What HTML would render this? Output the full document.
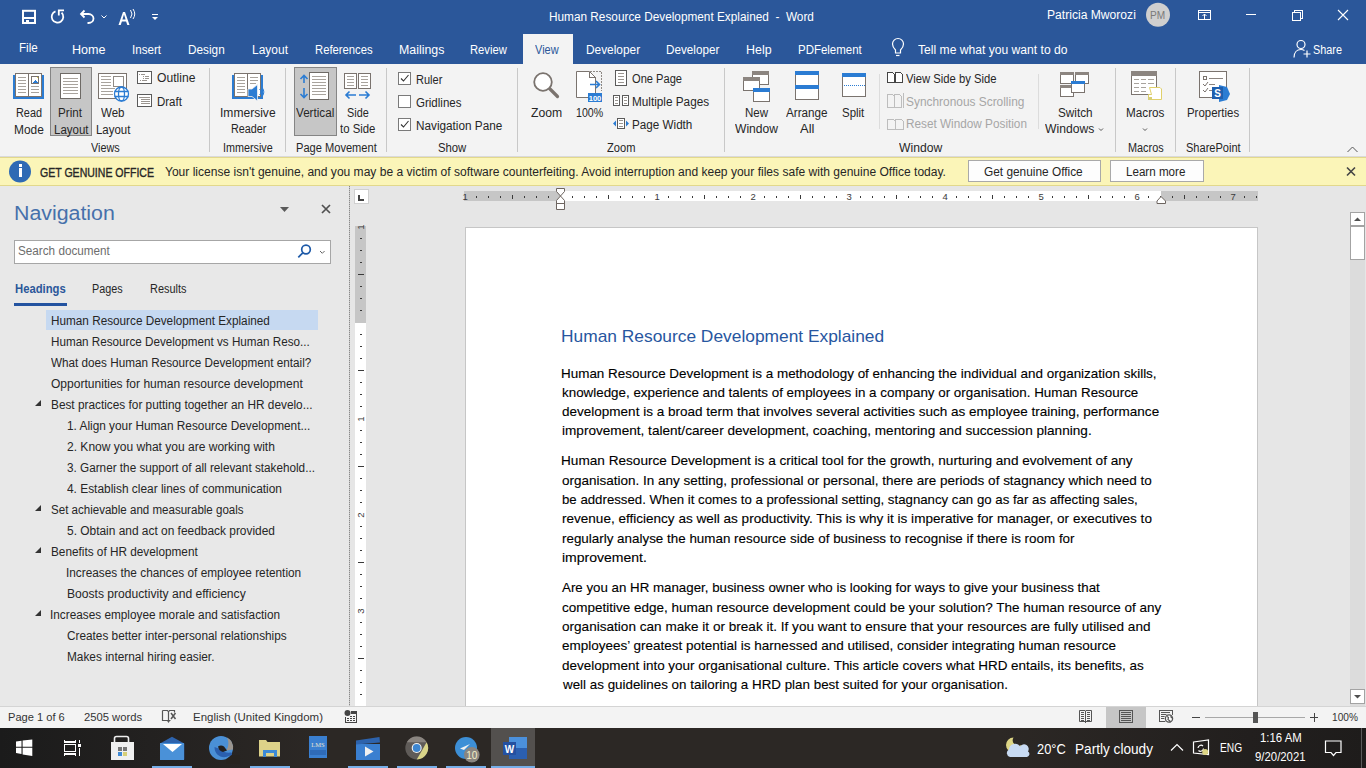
<!DOCTYPE html>
<html><head><meta charset="utf-8">
<style>
*{margin:0;padding:0;box-sizing:border-box}
html,body{width:1366px;height:768px;overflow:hidden;background:#e6e6e6;font-family:"Liberation Sans",sans-serif}
.a{position:absolute}
.t{position:absolute;white-space:pre;line-height:1;transform-origin:0 0}
svg{position:absolute;overflow:visible}
</style></head><body>
<div class="a" style="left:0;top:0;width:1366px;height:64px;background:#2b579a"></div>
<div class="a" style="left:523px;top:34px;width:50px;height:30px;background:#f3f3f3"></div>
<div class="a" style="left:0;top:64px;width:1366px;height:93px;background:#f3f3f3;border-bottom:1px solid #dadada"></div>
<div class="a" style="left:0;top:157px;width:1366px;height:29px;background:#fbf5b8;border-top:1px solid #e2d88c;border-bottom:1px solid #e2d88c"></div>
<div class="a" style="left:0;top:186px;width:349px;height:520px;background:#e8e8e8"></div>
<div class="a" style="left:349px;top:186px;width:1px;height:520px;background:#c6c6c6"></div>
<div class="a" style="left:350px;top:186px;width:1016px;height:520px;background:#e6e6e6"></div>
<div class="a" style="left:465px;top:227px;width:793px;height:479px;background:#fff;border:1px solid #c6c6c6;border-bottom:none"></div>
<div class="a" style="left:0;top:706px;width:1366px;height:22px;background:#f3f3f3;border-top:1px solid #d4d4d4"></div>
<div class="a" style="left:0;top:728px;width:1366px;height:40px;background:linear-gradient(90deg,#1b1b1b 0px,#232120 150px,#2c2825 320px,#2c2825 1000px,#221f1e 1250px,#1e1c1b 1366px)"></div>
<svg width="1366" height="768" style="left:0;top:0" shape-rendering="crispEdges">
<!-- ===== QAT ===== -->
<g fill="none" stroke="#fff" shape-rendering="geometricPrecision">
 <rect x="23" y="10.8" width="12" height="12.2" stroke-width="2"/>
 <path d="M55.5 11.35A5.8 5.8 0 1 0 61.6 12.7" stroke-width="1.8"/>
 <path d="M58.8 15.5V10.4H64" stroke-width="1.8"/>
 <path d="M81 14h7.5a5 4.5 0 0 1 0 9h-1" stroke-width="1.8"/>
 <path d="M84.5 10.5l-3.5 3.5 3.5 3.5" stroke-width="1.8"/>
 <path d="M101.5 15.5l2.5 2.5 2.5-2.5" stroke-width="1"/>
 <path d="M130.5 10a5 6 0 0 1 0 8M133 9a7 8 0 0 1 0 10" stroke-width="1"/>
</g>
<rect x="22" y="16.8" width="14" height="2.5" fill="#fff"/>
<rect x="26" y="20" width="3" height="3" fill="#fff"/>
<path d="M118.5 25l4.5-13h2l4.5 13h-2.2l-1.2-3.5h-4.2l-1.2 3.5zM122.4 19.5h3.2l-1.6-5z" fill="#fff" shape-rendering="geometricPrecision"/>
<rect x="152" y="14" width="6" height="1" fill="#fff"/>
<path d="M152 17h6l-3 3z" fill="#fff" shape-rendering="geometricPrecision"/>
<!-- window controls -->
<circle cx="1158" cy="14.8" r="12" fill="#cfcfcf" shape-rendering="geometricPrecision"/>
<rect x="1198.5" y="10.5" width="12" height="9" fill="none" stroke="#fff"/>
<rect x="1198" y="12" width="13" height="1" fill="#fff"/>
<path d="M1204.5 19v-5M1202.5 16l2-2 2 2" fill="none" stroke="#fff" shape-rendering="geometricPrecision"/>
<rect x="1246" y="14" width="10" height="1" fill="#fff"/>
<rect x="1292.5" y="12.5" width="8" height="8" fill="none" stroke="#fff"/>
<path d="M1294.5 12.5v-2h8v8h-2" fill="none" stroke="#fff"/>
<path d="M1338 10l10 10M1348 10l-10 10" stroke="#fff" stroke-width="1.1" shape-rendering="geometricPrecision"/>
<!-- lightbulb -->
<g fill="none" stroke="#fff" stroke-width="1.2" shape-rendering="geometricPrecision">
 <path d="M895.5 53v-3c-1.5-1.5-3-3.5-3-6a5.5 5.5 0 0 1 11 0c0 2.5-1.5 4.5-3 6v3z"/>
 <path d="M896 55.5h3.5"/>
</g>
<!-- share icon -->
<g fill="none" stroke="#fff" stroke-width="1.2" shape-rendering="geometricPrecision">
 <circle cx="1301" cy="44.5" r="4"/>
 <path d="M1294 57.5c0-5 3-8 7-8 1.5 0 2.5.4 3.5 1"/>
 <path d="M1307 50.5v7M1303.5 54h7"/>
</g>
<!-- ===== Ribbon selected buttons ===== -->
<rect x="50.5" y="67.5" width="41" height="68" fill="#c6c6c6" stroke="#858585"/>
<rect x="294.5" y="67.5" width="42" height="68" fill="#c6c6c6" stroke="#858585"/>
<!-- separators -->
<g fill="#c8c8c8">
 <rect x="209" y="68" width="1" height="84"/><rect x="285" y="68" width="1" height="84"/><rect x="386" y="68" width="1" height="84"/>
 <rect x="517" y="68" width="1" height="84"/><rect x="724" y="68" width="1" height="84"/> <rect x="1115" y="68" width="1" height="84"/><rect x="1175" y="68" width="1" height="84"/><rect x="1249" y="68" width="1" height="84"/>
</g>
<g fill="#dcdcdc"><rect x="879" y="74" width="1" height="55"/><rect x="1038" y="74" width="1" height="55"/></g>
<!-- Read Mode -->
<rect x="13" y="75" width="31" height="24" fill="#2b7cd3"/>
<rect x="15.5" y="73.5" width="13" height="23" fill="#fff" stroke="#7a736e"/>
<rect x="28.5" y="73.5" width="13" height="23" fill="#fff" stroke="#7a736e"/>
<g fill="#a8a39d"><rect x="18" y="77" width="8" height="1"/><rect x="18" y="80" width="8" height="1"/><rect x="18" y="83" width="8" height="1"/><rect x="18" y="86" width="8" height="1"/><rect x="18" y="89" width="8" height="1"/><rect x="18" y="92" width="8" height="1"/>
<rect x="31" y="86" width="8" height="1"/><rect x="31" y="89" width="8" height="1"/><rect x="31" y="92" width="8" height="1"/></g>
<rect x="31.5" y="76.5" width="7" height="7" fill="#fff" stroke="#7a736e"/>
<path d="M32 83l3-3 2 2 1-1v2z" fill="#2b7cd3"/><rect x="37" y="77" width="1" height="1" fill="#e8d44d"/>
<!-- Print Layout -->
<rect x="60.5" y="73.5" width="20" height="25" fill="#fff" stroke="#6e6a66"/>
<g fill="#a8a39d"><rect x="63" y="78" width="15" height="1"/><rect x="63" y="81" width="15" height="1"/><rect x="63" y="84" width="15" height="1"/><rect x="63" y="87" width="15" height="1"/><rect x="63" y="90" width="15" height="1"/><rect x="63" y="93" width="15" height="1"/></g>
<!-- Web Layout -->
<rect x="98.5" y="73.5" width="28" height="25" fill="#fff" stroke="#7a736e"/>
<g fill="#a8a39d"><rect x="101" y="76" width="10" height="1"/><rect x="101" y="79" width="10" height="1"/><rect x="101" y="82" width="10" height="1"/><rect x="101" y="85" width="10" height="1"/><rect x="101" y="88" width="14" height="1"/><rect x="101" y="91" width="12" height="1"/><rect x="101" y="94" width="12" height="1"/></g>
<rect x="113.5" y="76.5" width="10" height="10" fill="#fff" stroke="#8f8a85"/>
<g shape-rendering="geometricPrecision" fill="none" stroke="#2b7cd3" stroke-width="1.3">
 <circle cx="121.5" cy="94" r="7" fill="#fff"/>
 <ellipse cx="121.5" cy="94" rx="3" ry="7"/>
 <path d="M114.5 91.5h14M114.5 96.5h14"/>
</g>
<!-- Outline / Draft -->
<rect x="137.5" y="71.5" width="14" height="12" fill="#fff" stroke="#5a5a5a"/>
<g fill="#9a9590"><rect x="139" y="74" width="1" height="1"/><rect x="141" y="74" width="4" height="1"/><rect x="143" y="76" width="1" height="1"/><rect x="145" y="76" width="4" height="1"/><rect x="143" y="78" width="1" height="1"/><rect x="145" y="78" width="4" height="1"/><rect x="140" y="80" width="1" height="1"/><rect x="142" y="80" width="5" height="1"/></g>
<rect x="137.5" y="94.5" width="14" height="12" fill="#fff" stroke="#5a5a5a"/>
<g fill="#9a9590"><rect x="139" y="97" width="11" height="1"/><rect x="141" y="99" width="9" height="1"/><rect x="141" y="101" width="9" height="1"/><rect x="141" y="103" width="9" height="1"/></g>
<!-- Immersive Reader -->
<rect x="232" y="75" width="31" height="24" fill="#2b7cd3"/>
<rect x="234.5" y="73.5" width="13" height="23" fill="#fff" stroke="#7a736e"/>
<rect x="247.5" y="73.5" width="13" height="23" fill="#fff" stroke="#7a736e"/>
<g fill="#a8a39d"><rect x="237" y="77" width="8" height="1"/><rect x="237" y="80" width="8" height="1"/><rect x="237" y="83" width="8" height="1"/><rect x="237" y="86" width="8" height="1"/><rect x="237" y="89" width="8" height="1"/><rect x="237" y="92" width="8" height="1"/>
<rect x="250" y="77" width="8" height="1"/><rect x="250" y="80" width="8" height="1"/><rect x="250" y="83" width="6" height="1"/></g>
<path d="M248 89h4l5.5-4.5v16.5l-5.5-4.5h-4z" fill="#2b7cd3" stroke="#f3f3f3" stroke-width="0.8" shape-rendering="geometricPrecision"/>
<path d="M259.5 89a4 4 0 0 1 0 6M261.5 87a6.5 6.5 0 0 1 0 10" fill="none" stroke="#2b7cd3" stroke-width="1" shape-rendering="geometricPrecision"/>
<!-- Vertical -->
<g fill="none" stroke="#2b7cd3" stroke-width="1.6" shape-rendering="geometricPrecision">
 <path d="M304 76v7M304 88v9M300.5 79l3.5-3.5 3.5 3.5M300.5 94l3.5 3.5 3.5-3.5"/>
</g>
<rect x="309.5" y="72.5" width="19" height="27" fill="#fff" stroke="#6e6a66"/>
<g fill="#a8a39d"><rect x="312" y="76" width="14" height="1"/><rect x="312" y="79" width="14" height="1"/><rect x="312" y="82" width="14" height="1"/><rect x="312" y="85" width="14" height="1"/><rect x="312" y="88" width="14" height="1"/><rect x="312" y="91" width="14" height="1"/><rect x="312" y="94" width="14" height="1"/></g>
<!-- Side to Side -->
<rect x="344.5" y="73.5" width="12" height="15" fill="#fff" stroke="#7a736e"/>
<rect x="358.5" y="73.5" width="12" height="15" fill="#fff" stroke="#7a736e"/>
<g fill="#a8a39d"><rect x="347" y="76" width="7" height="1"/><rect x="347" y="79" width="7" height="1"/><rect x="347" y="82" width="7" height="1"/><rect x="347" y="85" width="7" height="1"/><rect x="361" y="76" width="7" height="1"/><rect x="361" y="79" width="7" height="1"/><rect x="361" y="82" width="7" height="1"/><rect x="361" y="85" width="7" height="1"/></g>
<g fill="none" stroke="#2b7cd3" stroke-width="1.6" shape-rendering="geometricPrecision">
 <path d="M346 95h10M349.5 91.5l-3.5 3.5 3.5 3.5M359 95h10M365.5 91.5l3.5 3.5-3.5 3.5"/>
</g>
<!-- checkboxes -->
<g fill="#fff" stroke="#7a7a7a"><rect x="398.5" y="72.5" width="12" height="12"/><rect x="398.5" y="95.5" width="12" height="12"/><rect x="398.5" y="118.5" width="12" height="12"/></g>
<g fill="none" stroke="#333" stroke-width="1.1" shape-rendering="geometricPrecision"><path d="M401 78.5l2.5 2.5 5-6"/><path d="M401 124.5l2.5 2.5 5-6"/></g>
<!-- Zoom -->
<g shape-rendering="geometricPrecision">
 <path d="M549.5 88.5l8 8" stroke="#7a736e" stroke-width="3.2" stroke-linecap="round"/>
 <circle cx="543" cy="82" r="8.8" fill="#fff" stroke="#7a736e" stroke-width="1.8"/>
</g>
<!-- 100% -->
<path d="M576.5 71.5h13l6 6v20h-19z" fill="#fff" stroke="#7a736e" shape-rendering="geometricPrecision"/>
<path d="M589.5 71.5v6h6" fill="none" stroke="#7a736e"/>
<path d="M590 71.5h11.5v19" fill="none" stroke="#8f8a85" stroke-dasharray="2 1"/>
<g fill="none" stroke="#2b7cd3" stroke-width="1.6" shape-rendering="geometricPrecision"><path d="M590 84.5h9.5M596 81l3.5 3.5-3.5 3.5"/></g>
<rect x="588" y="93" width="14" height="9" fill="#2b7cd3"/>
<text x="595" y="100.6" font-family="Liberation Sans" font-size="7.5" font-weight="700" fill="#fff" text-anchor="middle" shape-rendering="geometricPrecision">100</text>
<!-- One page / Multiple / Width -->
<rect x="615.5" y="70.5" width="11" height="15" fill="#fff" stroke="#5a5a5a"/>
<g fill="#9a9590"><rect x="618" y="73" width="6" height="1"/><rect x="618" y="76" width="6" height="1"/><rect x="618" y="79" width="6" height="1"/><rect x="618" y="82" width="6" height="1"/></g>
<rect x="613.5" y="95.5" width="6" height="10" fill="#fff" stroke="#5a5a5a"/><rect x="622.5" y="95.5" width="6" height="10" fill="#fff" stroke="#5a5a5a"/>
<g fill="#9a9590"><rect x="615" y="97" width="3" height="1"/><rect x="615" y="100" width="3" height="1"/><rect x="615" y="103" width="3" height="1"/><rect x="624" y="97" width="3" height="1"/><rect x="624" y="100" width="3" height="1"/><rect x="624" y="103" width="3" height="1"/></g>
<rect x="617.5" y="118.5" width="7" height="10" fill="#fff" stroke="#5a5a5a"/>
<g fill="#9a9590"><rect x="619" y="120" width="4" height="1"/><rect x="619" y="123" width="4" height="1"/><rect x="619" y="126" width="4" height="1"/></g>
<path d="M613 123.5l3-3v6zM629 123.5l-3-3v6z" fill="#2b7cd3" shape-rendering="geometricPrecision"/>
<!-- New Window -->
<rect x="752.5" y="71.5" width="16" height="13" fill="#fff" stroke="#7a736e"/><rect x="752" y="71" width="17" height="4" fill="#8c8580"/>
<rect x="743.5" y="77.5" width="16" height="13" fill="#fff" stroke="#7a736e"/><rect x="743" y="77" width="17" height="4" fill="#8c8580"/>
<rect x="753.5" y="88.5" width="16" height="13" fill="#fff" stroke="#7a736e"/><rect x="753" y="88" width="17" height="4" fill="#2b7cd3"/>
<!-- Arrange All -->
<rect x="795.5" y="71.5" width="23" height="28" fill="#fff" stroke="#7a736e"/>
<rect x="795" y="71" width="24" height="4" fill="#2b7cd3"/><rect x="795" y="85" width="24" height="4" fill="#2b7cd3"/>
<!-- Split -->
<rect x="842.5" y="73.5" width="23" height="23" fill="#fff" stroke="#7a736e"/>
<rect x="842" y="73" width="24" height="4" fill="#2b7cd3"/>
<path d="M844 85.5h21" stroke="#2b7cd3" stroke-dasharray="1 1"/>
<!-- View side by side etc -->
<g fill="#fff" stroke="#444"><path d="M887.5 72.5h5l2 2v8h-7z"/><path d="M895.5 72.5h5l2 2v8h-7z"/></g>
<g fill="none" stroke="#bdbdbd"><path d="M887.5 94.5h5l2 2v11h-7z"/><path d="M894.5 94.5h5l2 2v11h-7z"/><path d="M903.5 93v15"/></g>
<g fill="none" stroke="#bdbdbd"><path d="M887.5 119.5h6l2 2v8h-8z"/><path d="M895.5 119.5h6l2 2v8h-8z"/></g>
<!-- Switch Windows -->
<rect x="1060.5" y="72.5" width="13" height="11" fill="#fff" stroke="#7a736e"/><rect x="1060" y="72" width="14" height="3" fill="#8c8580"/>
<rect x="1075.5" y="72.5" width="13" height="11" fill="#fff" stroke="#7a736e"/><rect x="1075" y="72" width="14" height="3" fill="#8c8580"/>
<rect x="1060.5" y="85.5" width="13" height="11" fill="#fff" stroke="#7a736e"/><rect x="1060" y="85" width="14" height="3" fill="#8c8580"/>
<rect x="1071.5" y="81.5" width="13" height="11" fill="#fff" stroke="#7a736e"/><rect x="1071" y="81" width="14" height="3" fill="#2b7cd3"/>
<path d="M1099 128.5l2 2 2-2" fill="none" stroke="#555" shape-rendering="geometricPrecision"/>
<!-- Macros -->
<rect x="1131.5" y="71.5" width="25" height="23" fill="#fff" stroke="#7a736e"/><rect x="1131" y="71" width="26" height="5" fill="#8c8580"/>
<g fill="#a8a39d"><rect x="1134" y="79" width="5" height="1"/><rect x="1141" y="79" width="5" height="1"/><rect x="1148" y="79" width="6" height="1"/><rect x="1134" y="83" width="5" height="1"/><rect x="1141" y="83" width="5" height="1"/><rect x="1148" y="83" width="6" height="1"/><rect x="1134" y="87" width="5" height="1"/><rect x="1141" y="87" width="5" height="1"/><rect x="1134" y="91" width="5" height="1"/><rect x="1141" y="91" width="5" height="1"/></g>
<path d="M1149.5 87.5h10.5l1.5 1.5v10.5h-11l-2-2v-3h3z" fill="#fff" stroke="#e0d06a" shape-rendering="geometricPrecision"/>
<path d="M1147.5 96.5h4v3h-4z" fill="#d9cf75"/>
<path d="M1143 128.5l2 2 2-2" fill="none" stroke="#555" shape-rendering="geometricPrecision"/>
<!-- Properties -->
<rect x="1199.5" y="71.5" width="27" height="26" fill="#fff" stroke="#7a736e"/>
<rect x="1203.5" y="76.5" width="3" height="3" fill="none" stroke="#7a736e"/>
<g fill="#8c8580"><rect x="1209" y="78" width="14" height="1"/><rect x="1209" y="84" width="6" height="1"/><rect x="1209" y="90" width="3" height="1"/></g>
<path d="M1203 84l2 2 3-4M1203 90l2 2 3-4" fill="none" stroke="#7a736e" shape-rendering="geometricPrecision"/>
<path d="M1219 85l8 2 3 7-3 6-8 2z" fill="#2b7cd3" shape-rendering="geometricPrecision"/>
<rect x="1212" y="87" width="11" height="12" fill="#1f5fae"/>
<text x="1217.5" y="97" font-family="Liberation Sans" font-size="10" font-weight="700" fill="#fff" text-anchor="middle" shape-rendering="geometricPrecision">S</text>
<!-- collapse -->
<path d="M1347.5 152l5-5 5 5" fill="none" stroke="#555" shape-rendering="geometricPrecision"/>
<!-- ===== Yellow bar ===== -->
<circle cx="20" cy="171.5" r="11" fill="#2e6ab4" shape-rendering="geometricPrecision"/>
<rect x="19" y="168" width="2.5" height="9" fill="#fff"/><rect x="19" y="164" width="2.5" height="2.5" fill="#fff"/>
<rect x="968.5" y="160.5" width="132" height="21" fill="#fdfdfd" stroke="#a9a9a9"/>
<rect x="1110.5" y="160.5" width="93" height="21" fill="#fdfdfd" stroke="#a9a9a9"/>
<path d="M1347 167.5l8 8M1355 167.5l-8 8" stroke="#444" stroke-width="1.6" shape-rendering="geometricPrecision"/>
</svg>
<svg width="1366" height="768" style="left:0;top:0" shape-rendering="crispEdges">
<!-- ===== Nav pane ===== -->
<path d="M280 207h9l-4.5 5z" fill="#5a5a5a" shape-rendering="geometricPrecision"/>
<path d="M322 205l8 8M330 205l-8 8" stroke="#505050" stroke-width="1.7" shape-rendering="geometricPrecision"/>
<rect x="14.5" y="240.5" width="316" height="23" fill="#fff" stroke="#a6a6a6"/>
<g fill="none" stroke="#1e5aa8" stroke-width="1.7" shape-rendering="geometricPrecision">
 <circle cx="306" cy="249.5" r="4.3"/><path d="M302.8 252.8l-4.5 4.5"/>
</g>
<path d="M320 251l2.3 2.3 2.3-2.3" fill="none" stroke="#666" stroke-width="1" shape-rendering="geometricPrecision"/>
<rect x="14" y="303" width="53" height="3" fill="#2353a0"/>
<rect x="46" y="310" width="272" height="20" fill="#c6d9f1"/>
<g fill="#333" shape-rendering="geometricPrecision">
 <path d="M41 400v6h-6z"/><path d="M41 505v6h-6z"/><path d="M41 547v6h-6z"/><path d="M41 610v6h-6z"/>
</g>
<!-- splitter dotted -->
<path d="M349.5 186v520" stroke="#8a8a8a" stroke-dasharray="1 1"/>
<!-- ===== Ruler ===== -->
<rect x="354" y="189" width="14" height="14" fill="#fff" stroke="#d0d0d0"/>
<path d="M359 195v5h5" fill="none" stroke="#444" stroke-width="1.8"/>
<rect x="464" y="191" width="97" height="10" fill="#c6c6c6"/>
<rect x="561" y="191" width="600" height="10" fill="#fff"/>
<rect x="1161" y="191" width="97" height="10" fill="#c6c6c6"/>
<g fill="#3a3a3a" id="ticks"></g>
<!-- vertical ruler -->
<rect x="355" y="226" width="11" height="97" fill="#c6c6c6"/>
<rect x="355" y="323" width="11" height="383" fill="#fff"/>
<g fill="#3a3a3a"><rect x="476" y="196" width="1" height="2"/><rect x="488" y="196" width="1" height="2"/><rect x="500" y="196" width="1" height="2"/><rect x="512" y="195" width="1" height="4"/><rect x="524" y="196" width="1" height="2"/><rect x="536" y="196" width="1" height="2"/><rect x="548" y="196" width="1" height="2"/><rect x="572" y="196" width="1" height="2"/><rect x="584" y="196" width="1" height="2"/><rect x="596" y="196" width="1" height="2"/><rect x="608" y="195" width="1" height="4"/><rect x="620" y="196" width="1" height="2"/><rect x="632" y="196" width="1" height="2"/><rect x="644" y="196" width="1" height="2"/><rect x="668" y="196" width="1" height="2"/><rect x="680" y="196" width="1" height="2"/><rect x="692" y="196" width="1" height="2"/><rect x="704" y="195" width="1" height="4"/><rect x="716" y="196" width="1" height="2"/><rect x="728" y="196" width="1" height="2"/><rect x="740" y="196" width="1" height="2"/><rect x="764" y="196" width="1" height="2"/><rect x="776" y="196" width="1" height="2"/><rect x="788" y="196" width="1" height="2"/><rect x="800" y="195" width="1" height="4"/><rect x="812" y="196" width="1" height="2"/><rect x="824" y="196" width="1" height="2"/><rect x="836" y="196" width="1" height="2"/><rect x="860" y="196" width="1" height="2"/><rect x="872" y="196" width="1" height="2"/><rect x="884" y="196" width="1" height="2"/><rect x="896" y="195" width="1" height="4"/><rect x="908" y="196" width="1" height="2"/><rect x="920" y="196" width="1" height="2"/><rect x="932" y="196" width="1" height="2"/><rect x="956" y="196" width="1" height="2"/><rect x="968" y="196" width="1" height="2"/><rect x="980" y="196" width="1" height="2"/><rect x="992" y="195" width="1" height="4"/><rect x="1004" y="196" width="1" height="2"/><rect x="1016" y="196" width="1" height="2"/><rect x="1028" y="196" width="1" height="2"/><rect x="1052" y="196" width="1" height="2"/><rect x="1064" y="196" width="1" height="2"/><rect x="1076" y="196" width="1" height="2"/><rect x="1088" y="195" width="1" height="4"/><rect x="1100" y="196" width="1" height="2"/><rect x="1112" y="196" width="1" height="2"/><rect x="1124" y="196" width="1" height="2"/><rect x="1148" y="196" width="1" height="2"/><rect x="1160" y="196" width="1" height="2"/><rect x="1172" y="196" width="1" height="2"/><rect x="1184" y="195" width="1" height="4"/><rect x="1196" y="196" width="1" height="2"/><rect x="1208" y="196" width="1" height="2"/><rect x="1220" y="196" width="1" height="2"/><rect x="1244" y="196" width="1" height="2"/><rect x="1256" y="196" width="1" height="2"/><rect x="360" y="238" width="2" height="1"/><rect x="360" y="250" width="2" height="1"/><rect x="360" y="262" width="2" height="1"/><rect x="358" y="274" width="6" height="1"/><rect x="360" y="286" width="2" height="1"/><rect x="360" y="298" width="2" height="1"/><rect x="360" y="310" width="2" height="1"/><rect x="360" y="334" width="2" height="1"/><rect x="360" y="346" width="2" height="1"/><rect x="360" y="358" width="2" height="1"/><rect x="358" y="370" width="6" height="1"/><rect x="360" y="382" width="2" height="1"/><rect x="360" y="394" width="2" height="1"/><rect x="360" y="406" width="2" height="1"/><rect x="360" y="430" width="2" height="1"/><rect x="360" y="442" width="2" height="1"/><rect x="360" y="454" width="2" height="1"/><rect x="358" y="466" width="6" height="1"/><rect x="360" y="478" width="2" height="1"/><rect x="360" y="490" width="2" height="1"/><rect x="360" y="502" width="2" height="1"/><rect x="360" y="526" width="2" height="1"/><rect x="360" y="538" width="2" height="1"/><rect x="360" y="550" width="2" height="1"/><rect x="358" y="562" width="6" height="1"/><rect x="360" y="574" width="2" height="1"/><rect x="360" y="586" width="2" height="1"/><rect x="360" y="598" width="2" height="1"/><rect x="360" y="622" width="2" height="1"/><rect x="360" y="634" width="2" height="1"/><rect x="360" y="646" width="2" height="1"/><rect x="358" y="658" width="6" height="1"/><rect x="360" y="670" width="2" height="1"/><rect x="360" y="682" width="2" height="1"/><rect x="360" y="694" width="2" height="1"/></g><text x="0" y="0" transform="translate(364,227) rotate(-90)" font-family="Liberation Sans" font-size="9.5" fill="#3a3a3a" text-anchor="middle" shape-rendering="geometricPrecision">1</text><text x="0" y="0" transform="translate(364,419) rotate(-90)" font-family="Liberation Sans" font-size="9.5" fill="#3a3a3a" text-anchor="middle" shape-rendering="geometricPrecision">1</text><text x="0" y="0" transform="translate(364,515) rotate(-90)" font-family="Liberation Sans" font-size="9.5" fill="#3a3a3a" text-anchor="middle" shape-rendering="geometricPrecision">2</text><text x="0" y="0" transform="translate(364,611) rotate(-90)" font-family="Liberation Sans" font-size="9.5" fill="#3a3a3a" text-anchor="middle" shape-rendering="geometricPrecision">3</text>
<path d="M556.5 188.5h8v3l-4 4.5 4 4.5v9h-8v-9l4-4.5-4-4.5z" fill="#fff" stroke="#6d6560" shape-rendering="geometricPrecision"/>
<path d="M556.5 203.5h8" stroke="#6d6560"/>
<path d="M1161 196.5l4.5 4.5v2.5h-8.5v-2.5z" fill="#fff" stroke="#6d6560" shape-rendering="geometricPrecision"/>
<!-- ===== Scrollbar ===== -->
<rect x="1350" y="212" width="15" height="494" fill="#dcdcdc"/>
<rect x="1350.5" y="212.5" width="14" height="13" fill="#fff" stroke="#a3a3a3"/>
<path d="M1354 221h7l-3.5-3.5z" fill="#505050" shape-rendering="geometricPrecision"/>
<rect x="1350.5" y="226.5" width="14" height="33" fill="#fff" stroke="#a3a3a3"/>
<rect x="1350.5" y="689.5" width="14" height="14" fill="#fff" stroke="#a3a3a3"/>
<path d="M1354 695h7l-3.5 3.5z" fill="#505050" shape-rendering="geometricPrecision"/>
<!-- ===== Status bar ===== -->
<g fill="none" stroke="#555" stroke-width="1.2" shape-rendering="geometricPrecision">
 <path d="M162.5 710.5h5l1 1.5 1-1.5h5v2M162.5 710.5v10h5l1 1.5 1-1.5h1M168.5 712v10.5"/>
 <path d="M171 713l4.5 6M175.5 713l-4.5 6" stroke-width="1.5"/>
</g>
<circle cx="347.5" cy="713" r="3" fill="#444" shape-rendering="geometricPrecision"/>
<rect x="351" y="711" width="6" height="2.5" fill="#444"/>
<path d="M345.5 717v5.5h11v-9" fill="none" stroke="#444" stroke-width="1.2"/>
<g fill="#444"><rect x="350" y="716" width="2" height="1"/><rect x="353" y="716" width="2" height="1"/><rect x="347" y="718" width="2" height="1"/><rect x="350" y="718" width="2" height="1"/><rect x="353" y="718" width="2" height="1"/><rect x="347" y="720" width="2" height="1"/><rect x="350" y="720" width="2" height="1"/><rect x="353" y="720" width="2" height="1"/></g>
<rect x="1106" y="707" width="40" height="21" fill="#c6c6c6"/>
<g fill="none" stroke="#555" shape-rendering="geometricPrecision">
 <path d="M1079.5 710.5h5.5l.5 .5.5-.5h5.5v11h-5.5l-.5.5-.5-.5h-5.5z"/><path d="M1085.5 711v12"/>
 
</g>
<g fill="#555"><rect x="1081" y="712" width="3" height="1"/><rect x="1081" y="714" width="3" height="1"/><rect x="1081" y="716" width="3" height="1"/><rect x="1081" y="718" width="3" height="1"/><rect x="1081" y="720" width="3" height="1"/><rect x="1087" y="712" width="3" height="1"/><rect x="1087" y="714" width="3" height="1"/><rect x="1087" y="716" width="3" height="1"/><rect x="1087" y="718" width="3" height="1"/><rect x="1087" y="720" width="3" height="1"/></g>
<rect x="1119.5" y="710.5" width="13" height="12" fill="none" stroke="#555"/>
<g fill="#555"><rect x="1121" y="712" width="10" height="1"/><rect x="1121" y="714" width="10" height="1"/><rect x="1121" y="716" width="10" height="1"/><rect x="1121" y="718" width="10" height="1"/><rect x="1121" y="720" width="10" height="1"/></g>
<path d="M1165.5 721.5h-6v-11h13v4" fill="none" stroke="#555"/>
<g fill="#555"><rect x="1161" y="712" width="9" height="1"/><rect x="1161" y="714" width="6" height="1"/><rect x="1161" y="716" width="4" height="1"/><rect x="1161" y="718" width="4" height="1"/></g>
<circle cx="1169" cy="718.5" r="4.8" fill="#f3f3f3" shape-rendering="geometricPrecision"/><circle cx="1169" cy="718.5" r="3.6" fill="#fff" stroke="#555" stroke-width="1.3" shape-rendering="geometricPrecision"/>
<path d="M1167 716.5l1.5 1 -.5 2 2 1.5v1.5M1171 715.5v1.5l1 1" fill="none" stroke="#555" stroke-width="1.2" shape-rendering="geometricPrecision"/>
<rect x="1192" y="717" width="8" height="1" fill="#444"/>
<rect x="1205" y="717" width="100" height="1" fill="#a8a8a8"/>
<rect x="1253" y="712" width="5" height="11" fill="#555"/>
<rect x="1310" y="717" width="8" height="1" fill="#444"/><rect x="1313.5" y="713" width="1" height="9" fill="#444"/>
<!-- ===== Taskbar ===== -->
<path d="M16 741.5l5.5-.8v6h-5.5zM22.6 740.6l9.7-1v7.1h-9.7zM16 747.7h5.5v6.2l-5.5-.8zM22.6 747.7h9.7v8.2l-9.7-1.3z" fill="#fff" shape-rendering="geometricPrecision"/>
<g fill="none" stroke="#fff" stroke-width="1.2">
 <path d="M64.5 740v2h11v-2M64.5 756v-2h11v2"/><rect x="64.5" y="744.5" width="11" height="7"/><path d="M79.5 740v3M79.5 748v8"/>
</g>
<rect x="78" y="744" width="3" height="3" fill="#fff"/>
<path d="M114.5 742v-3.5a2 2 0 0 1 2-2h10a2 2 0 0 1 2 2v3.5" fill="none" stroke="#eee" stroke-width="1.6" shape-rendering="geometricPrecision"/>
<rect x="111" y="742" width="23" height="18" fill="#f0f0f0"/>
<rect x="118" y="747" width="4" height="4" fill="#777"/><rect x="123" y="747" width="4" height="4" fill="#777"/><rect x="118" y="752" width="4" height="4" fill="#3f8ad6"/><rect x="123" y="752" width="4" height="4" fill="#d6cf78"/>
<!-- mail -->
<path d="M160 743.5l12-6.8 12.3 6.8v16h-24.3z" fill="#2d63ad" shape-rendering="geometricPrecision"/>
<rect x="160" y="743" width="24.3" height="16.5" fill="#4a91d8"/>
<path d="M163 744h19l-9.5 8z" fill="#fff" shape-rendering="geometricPrecision"/>
<!-- edge -->
<g shape-rendering="geometricPrecision">
 <circle cx="221" cy="748" r="12" fill="#4a90d6"/>
 <path d="M227 737.6A12 12 0 0 1 233 749.5L226.5 750.5Q230 744 227 737.6z" fill="#9a958f"/>
 <path d="M214.5 747C214.5 754 220 758 226 757L232 755L231.5 752.5C227 753 223 752.5 220 749z" fill="#2a5fae"/>
 <path d="M218 746.5Q221 744.5 224 746.5L227 750.5L223 752Q219 751 218 746.5z" fill="#23201e"/>
 <path d="M226 760L232.5 755L240 755L240 764L226 764z" fill="#27231f"/>
</g>
<!-- folder -->
<path d="M259 740h7l1.5 2h12.5v14.5h-21z" fill="#ddd289" shape-rendering="geometricPrecision"/>
<path d="M262.5 757v-7.5h14v7.5h-3v-4h-8v4z" fill="#3d8ad6"/>
<!-- LMS -->
<rect x="309" y="736" width="18" height="22" fill="#3a7fd0"/>
<rect x="310" y="750" width="16" height="5" fill="#2f6bb8"/>
<text x="318" y="746.5" font-family="Liberation Serif" font-size="6.5" fill="#e8e4d0" text-anchor="middle" shape-rendering="geometricPrecision">LMS</text>
<!-- video -->
<rect x="356" y="744" width="24" height="15.6" fill="#3a7fd0"/>
<path d="M356 740.5L379.5 737L380 742.5L356 744.5z" fill="#2d63ad" shape-rendering="geometricPrecision"/>
<path d="M365 746.5v10l8.5-5z" fill="#f0f0f0" shape-rendering="geometricPrecision"/>
<!-- chrome -->
<g shape-rendering="geometricPrecision">
 <circle cx="416.7" cy="748" r="11.4" fill="#5f5b58"/>
 <path d="M406.8 742.3a11.4 11.4 0 0 1 19.8 0h-9.9z" fill="#8a8580"/>
 <path d="M426.6 742.3a11.4 11.4 0 0 1-9.9 17.1l5-8.5z" fill="#d9d488"/>
 <circle cx="416.7" cy="748" r="5" fill="#f3f3f3"/><circle cx="416.7" cy="748" r="3.9" fill="#3d86d0"/>
</g>
<!-- telegram -->
<g shape-rendering="geometricPrecision">
 <circle cx="466" cy="748" r="11" fill="#3d8fd6"/>
 <path d="M460 748.5l10-4.5-6 6z" fill="#f0f0f0"/>
 <circle cx="471.8" cy="754.8" r="7.8" fill="#8a8580"/>
 <text x="471.8" y="758.6" font-family="Liberation Sans" font-size="10" fill="#f5f0c8" text-anchor="middle">10</text>
</g>
<!-- word active -->
<rect x="491" y="728" width="44" height="40" fill="#53504e"/>
<rect x="509" y="737" width="18" height="11" fill="#4b90dc"/>
<rect x="509" y="748" width="18" height="11" fill="#2b5fb0"/>
<rect x="503" y="742" width="13" height="12.5" fill="#2450a0"/>
<text x="509.5" y="752.5" font-family="Liberation Sans" font-size="10" font-weight="700" fill="#fff" text-anchor="middle" shape-rendering="geometricPrecision">W</text>
<!-- underlines -->
<g fill="#76aee8"><rect x="152" y="766" width="40" height="2"/><rect x="250" y="766" width="40" height="2"/><rect x="348" y="766" width="40" height="2"/><rect x="397" y="766" width="40" height="2"/><rect x="446" y="766" width="40" height="2"/><rect x="491" y="766" width="44" height="2"/></g>
<!-- tray -->
<g shape-rendering="geometricPrecision">
 <path d="M1013.5 737.5A7.5 7.5 0 1 0 1021 745A5.5 5.5 0 0 1 1013.5 737.5z" fill="#ddd585"/>
 <path d="M1010 757a4 4 0 0 1-1-7.5 6 6 0 0 1 11-3 4.5 4.5 0 0 1 8 5 3 3 0 0 1-1 5.5z" fill="#c8daf2"/>
</g>
<path d="M1171 750.5l6-6 6 6" fill="none" stroke="#fff" stroke-width="1.2" shape-rendering="geometricPrecision"/>
<g fill="none" stroke="#fff" stroke-width="1.2" shape-rendering="geometricPrecision"><path d="M1193.5 742l15-2v14.5l-15-1.5z"/><path d="M1198 748a3 3 0 0 1 5-2M1203.5 748.5a3 3 0 0 1-5 2"/></g>
<circle cx="1205.2" cy="752.1" r="3" fill="#ddd585" shape-rendering="geometricPrecision"/>
<path d="M1325.5 741h15.5v11.5h-5l-2.5 3-2.5-3h-5.5z" fill="none" stroke="#fff" stroke-width="1.2" shape-rendering="geometricPrecision"/>
<rect x="1361" y="728" width="1" height="40" fill="#5a5a5a"/>
</svg>

<div class="t" style="left:549.46px;top:10.62px;font-size:12.5px;color:#ffffff;font-weight:400;font-family:'Liberation Sans';transform:scaleX(0.9445);">Human Resource Development Explained  -  Word</div>
<div class="t" style="left:1046.63px;top:9.22px;font-size:12.5px;color:#ffffff;font-weight:400;font-family:'Liberation Sans';transform:scaleX(0.9687);">Patricia Mworozi</div>
<div class="t" style="left:1150.40px;top:10.19px;font-size:11px;color:#7a7a7a;font-weight:400;font-family:'Liberation Sans';transform:scaleX(0.9182);">PM</div>
<div class="t" style="left:19.27px;top:42.42px;font-size:12.5px;color:#ffffff;font-weight:400;font-family:'Liberation Sans';transform:scaleX(0.9276);">File</div>
<div class="t" style="left:72.39px;top:43.92px;font-size:12.5px;color:#ffffff;font-weight:400;font-family:'Liberation Sans';transform:scaleX(1.0064);">Home</div>
<div class="t" style="left:132.07px;top:43.92px;font-size:12.5px;color:#ffffff;font-weight:400;font-family:'Liberation Sans';transform:scaleX(0.9289);">Insert</div>
<div class="t" style="left:188.26px;top:43.92px;font-size:12.5px;color:#ffffff;font-weight:400;font-family:'Liberation Sans';transform:scaleX(0.9431);">Design</div>
<div class="t" style="left:251.54px;top:43.92px;font-size:12.5px;color:#ffffff;font-weight:400;font-family:'Liberation Sans';transform:scaleX(0.9580);">Layout</div>
<div class="t" style="left:314.60px;top:43.92px;font-size:12.5px;color:#ffffff;font-weight:400;font-family:'Liberation Sans';transform:scaleX(0.9015);">References</div>
<div class="t" style="left:398.71px;top:43.92px;font-size:12.5px;color:#ffffff;font-weight:400;font-family:'Liberation Sans';transform:scaleX(0.9888);">Mailings</div>
<div class="t" style="left:470.40px;top:43.92px;font-size:12.5px;color:#ffffff;font-weight:400;font-family:'Liberation Sans';transform:scaleX(0.8960);">Review</div>
<div class="t" style="left:586.05px;top:43.92px;font-size:12.5px;color:#ffffff;font-weight:400;font-family:'Liberation Sans';transform:scaleX(0.9496);">Developer</div>
<div class="t" style="left:666.36px;top:43.92px;font-size:12.5px;color:#ffffff;font-weight:400;font-family:'Liberation Sans';transform:scaleX(0.9353);">Developer</div>
<div class="t" style="left:746.01px;top:43.92px;font-size:12.5px;color:#ffffff;font-weight:400;font-family:'Liberation Sans';transform:scaleX(0.9937);">Help</div>
<div class="t" style="left:798.38px;top:43.92px;font-size:12.5px;color:#ffffff;font-weight:400;font-family:'Liberation Sans';transform:scaleX(0.9174);">PDFelement</div>
<div class="t" style="left:918.40px;top:43.92px;font-size:12.5px;color:#ffffff;font-weight:400;font-family:'Liberation Sans';transform:scaleX(0.9689);">Tell me what you want to do</div>
<div class="t" style="left:1313.00px;top:43.92px;font-size:12.5px;color:#ffffff;font-weight:400;font-family:'Liberation Sans';transform:scaleX(0.8682);">Share</div>
<div class="t" style="left:535.00px;top:43.92px;font-size:12.5px;color:#2b579a;font-weight:400;font-family:'Liberation Sans';transform:scaleX(0.8800);">View</div>
<div class="t" style="left:16.10px;top:107.04px;font-size:12px;color:#262626;font-weight:400;font-family:'Liberation Sans';transform:scaleX(0.9067);">Read</div>
<div class="t" style="left:13.70px;top:123.64px;font-size:12px;color:#262626;font-weight:400;font-family:'Liberation Sans';transform:scaleX(0.9920);">Mode</div>
<div class="t" style="left:58.30px;top:107.04px;font-size:12px;color:#262626;font-weight:400;font-family:'Liberation Sans';transform:scaleX(0.9708);">Print</div>
<div class="t" style="left:53.50px;top:123.64px;font-size:12px;color:#262626;font-weight:400;font-family:'Liberation Sans';transform:scaleX(0.9565);">Layout</div>
<div class="t" style="left:101.00px;top:107.04px;font-size:12px;color:#262626;font-weight:400;font-family:'Liberation Sans';transform:scaleX(0.9603);">Web</div>
<div class="t" style="left:95.80px;top:123.64px;font-size:12px;color:#262626;font-weight:400;font-family:'Liberation Sans';transform:scaleX(0.9538);">Layout</div>
<div class="t" style="left:156.50px;top:72.34px;font-size:12px;color:#262626;font-weight:400;font-family:'Liberation Sans';transform:scaleX(1.0092);">Outline</div>
<div class="t" style="left:156.50px;top:95.74px;font-size:12px;color:#262626;font-weight:400;font-family:'Liberation Sans';transform:scaleX(0.9561);">Draft</div>
<div class="t" style="left:90.50px;top:142.34px;font-size:12px;color:#262626;font-weight:400;font-family:'Liberation Sans';transform:scaleX(0.9027);">Views</div>
<div class="t" style="left:219.50px;top:106.84px;font-size:12px;color:#262626;font-weight:400;font-family:'Liberation Sans';transform:scaleX(1.0044);">Immersive</div>
<div class="t" style="left:230.50px;top:123.44px;font-size:12px;color:#262626;font-weight:400;font-family:'Liberation Sans';transform:scaleX(0.8994);">Reader</div>
<div class="t" style="left:222.50px;top:142.04px;font-size:12px;color:#262626;font-weight:400;font-family:'Liberation Sans';transform:scaleX(0.8982);">Immersive</div>
<div class="t" style="left:295.90px;top:106.84px;font-size:12px;color:#262626;font-weight:400;font-family:'Liberation Sans';transform:scaleX(0.9719);">Vertical</div>
<div class="t" style="left:347.00px;top:106.84px;font-size:12px;color:#262626;font-weight:400;font-family:'Liberation Sans';transform:scaleX(0.9037);">Side</div>
<div class="t" style="left:340.30px;top:123.44px;font-size:12px;color:#262626;font-weight:400;font-family:'Liberation Sans';transform:scaleX(0.9473);">to Side</div>
<div class="t" style="left:295.50px;top:142.04px;font-size:12px;color:#262626;font-weight:400;font-family:'Liberation Sans';transform:scaleX(0.9245);">Page Movement</div>
<div class="t" style="left:416.40px;top:73.74px;font-size:12px;color:#262626;font-weight:400;font-family:'Liberation Sans';transform:scaleX(0.9170);">Ruler</div>
<div class="t" style="left:416.40px;top:96.64px;font-size:12px;color:#262626;font-weight:400;font-family:'Liberation Sans';transform:scaleX(0.9609);">Gridlines</div>
<div class="t" style="left:416.40px;top:119.84px;font-size:12px;color:#262626;font-weight:400;font-family:'Liberation Sans';transform:scaleX(0.9798);">Navigation Pane</div>
<div class="t" style="left:438.30px;top:142.14px;font-size:12px;color:#262626;font-weight:400;font-family:'Liberation Sans';transform:scaleX(0.9423);">Show</div>
<div class="t" style="left:531.00px;top:106.64px;font-size:12px;color:#262626;font-weight:400;font-family:'Liberation Sans';transform:scaleX(1.0170);">Zoom</div>
<div class="t" style="left:575.60px;top:106.64px;font-size:12px;color:#262626;font-weight:400;font-family:'Liberation Sans';transform:scaleX(0.8833);">100%</div>
<div class="t" style="left:632.40px;top:73.24px;font-size:12px;color:#262626;font-weight:400;font-family:'Liberation Sans';transform:scaleX(0.9252);">One Page</div>
<div class="t" style="left:632.40px;top:96.14px;font-size:12px;color:#262626;font-weight:400;font-family:'Liberation Sans';transform:scaleX(0.9796);">Multiple Pages</div>
<div class="t" style="left:632.40px;top:119.04px;font-size:12px;color:#262626;font-weight:400;font-family:'Liberation Sans';transform:scaleX(0.9730);">Page Width</div>
<div class="t" style="left:607.00px;top:142.14px;font-size:12px;color:#262626;font-weight:400;font-family:'Liberation Sans';transform:scaleX(0.9258);">Zoom</div>
<div class="t" style="left:745.30px;top:106.54px;font-size:12px;color:#262626;font-weight:400;font-family:'Liberation Sans';transform:scaleX(0.9614);">New</div>
<div class="t" style="left:735.20px;top:123.24px;font-size:12px;color:#262626;font-weight:400;font-family:'Liberation Sans';transform:scaleX(1.0067);">Window</div>
<div class="t" style="left:786.30px;top:106.54px;font-size:12px;color:#262626;font-weight:400;font-family:'Liberation Sans';transform:scaleX(0.9740);">Arrange</div>
<div class="t" style="left:800.00px;top:123.24px;font-size:12px;color:#262626;font-weight:400;font-family:'Liberation Sans';transform:scaleX(1.0813);">All</div>
<div class="t" style="left:841.80px;top:106.54px;font-size:12px;color:#262626;font-weight:400;font-family:'Liberation Sans';transform:scaleX(0.9538);">Split</div>
<div class="t" style="left:906.20px;top:72.54px;font-size:12px;color:#262626;font-weight:400;font-family:'Liberation Sans';transform:scaleX(0.9377);">View Side by Side</div>
<div class="t" style="left:898.50px;top:141.64px;font-size:12px;color:#262626;font-weight:400;font-family:'Liberation Sans';transform:scaleX(1.0113);">Window</div>
<div class="t" style="left:1058.30px;top:106.74px;font-size:12px;color:#262626;font-weight:400;font-family:'Liberation Sans';transform:scaleX(0.9778);">Switch</div>
<div class="t" style="left:1045.30px;top:123.24px;font-size:12px;color:#262626;font-weight:400;font-family:'Liberation Sans';transform:scaleX(1.0107);">Windows</div>
<div class="t" style="left:1126.40px;top:106.74px;font-size:12px;color:#262626;font-weight:400;font-family:'Liberation Sans';transform:scaleX(0.9761);">Macros</div>
<div class="t" style="left:1128.00px;top:141.84px;font-size:12px;color:#262626;font-weight:400;font-family:'Liberation Sans';transform:scaleX(0.9049);">Macros</div>
<div class="t" style="left:1186.50px;top:106.74px;font-size:12px;color:#262626;font-weight:400;font-family:'Liberation Sans';transform:scaleX(0.9526);">Properties</div>
<div class="t" style="left:1185.50px;top:141.84px;font-size:12px;color:#262626;font-weight:400;font-family:'Liberation Sans';transform:scaleX(0.9211);">SharePoint</div>
<div class="t" style="left:906.00px;top:96.04px;font-size:12px;color:#a6a6a6;font-weight:400;font-family:'Liberation Sans';transform:scaleX(0.9914);">Synchronous Scrolling</div>
<div class="t" style="left:906.00px;top:118.24px;font-size:12px;color:#a6a6a6;font-weight:400;font-family:'Liberation Sans';transform:scaleX(0.9803);">Reset Window Position</div>
<div class="t" style="left:40.30px;top:166.64px;font-size:12px;color:#262626;font-weight:400;font-family:'Liberation Sans';transform:scaleX(0.8784);-webkit-text-stroke:0.35px #262626">GET GENUINE OFFICE</div>
<div class="t" style="left:165.40px;top:166.44px;font-size:12px;color:#262626;font-weight:400;font-family:'Liberation Sans';transform:scaleX(1.0034);">Your license isn&#x27;t genuine, and you may be a victim of software counterfeiting. Avoid interruption and keep your files safe with genuine Office today.</div>
<div class="t" style="left:984.30px;top:166.14px;font-size:12px;color:#262626;font-weight:400;font-family:'Liberation Sans';transform:scaleX(0.9883);">Get genuine Office</div>
<div class="t" style="left:1126.30px;top:166.14px;font-size:12px;color:#262626;font-weight:400;font-family:'Liberation Sans';transform:scaleX(0.9677);">Learn more</div>
<div class="t" style="left:13.93px;top:202.57px;font-size:20px;color:#4670ab;font-weight:400;font-family:'Liberation Sans';transform:scaleX(1.0663);">Navigation</div>
<div class="t" style="left:17.50px;top:245.44px;font-size:12px;color:#6d6d6d;font-weight:400;font-family:'Liberation Sans';transform:scaleX(0.9766);">Search document</div>
<div class="t" style="left:15.00px;top:282.84px;font-size:12px;color:#2b579a;font-weight:700;font-family:'Liberation Sans';transform:scaleX(0.9386);">Headings</div>
<div class="t" style="left:92.40px;top:282.84px;font-size:12px;color:#262626;font-weight:400;font-family:'Liberation Sans';transform:scaleX(0.8993);">Pages</div>
<div class="t" style="left:150.40px;top:282.84px;font-size:12px;color:#262626;font-weight:400;font-family:'Liberation Sans';transform:scaleX(0.9097);">Results</div>
<div class="t" style="left:51.10px;top:314.84px;font-size:12px;color:#262626;font-weight:400;font-family:'Liberation Sans';transform:scaleX(0.9794);">Human Resource Development Explained</div>
<div class="t" style="left:51.10px;top:335.84px;font-size:12px;color:#262626;font-weight:400;font-family:'Liberation Sans';transform:scaleX(0.9722);">Human Resource Development vs Human Reso...</div>
<div class="t" style="left:51.10px;top:356.84px;font-size:12px;color:#262626;font-weight:400;font-family:'Liberation Sans';transform:scaleX(0.9755);">What does Human Resource Development entail?</div>
<div class="t" style="left:51.10px;top:377.84px;font-size:12px;color:#262626;font-weight:400;font-family:'Liberation Sans';transform:scaleX(1.0037);">Opportunities for human resource development</div>
<div class="t" style="left:51.10px;top:398.84px;font-size:12px;color:#262626;font-weight:400;font-family:'Liberation Sans';transform:scaleX(0.9851);">Best practices for putting together an HR develo...</div>
<div class="t" style="left:66.80px;top:419.84px;font-size:12px;color:#262626;font-weight:400;font-family:'Liberation Sans';transform:scaleX(0.9858);">1. Align your Human Resource Development...</div>
<div class="t" style="left:66.80px;top:440.84px;font-size:12px;color:#262626;font-weight:400;font-family:'Liberation Sans';transform:scaleX(1.0021);">2. Know you what you are working with</div>
<div class="t" style="left:66.80px;top:461.84px;font-size:12px;color:#262626;font-weight:400;font-family:'Liberation Sans';transform:scaleX(0.9781);">3. Garner the support of all relevant stakehold...</div>
<div class="t" style="left:66.80px;top:482.84px;font-size:12px;color:#262626;font-weight:400;font-family:'Liberation Sans';transform:scaleX(0.9917);">4. Establish clear lines of communication</div>
<div class="t" style="left:51.10px;top:503.84px;font-size:12px;color:#262626;font-weight:400;font-family:'Liberation Sans';transform:scaleX(0.9624);">Set achievable and measurable goals</div>
<div class="t" style="left:66.80px;top:524.84px;font-size:12px;color:#262626;font-weight:400;font-family:'Liberation Sans';transform:scaleX(0.9928);">5. Obtain and act on feedback provided</div>
<div class="t" style="left:51.10px;top:545.84px;font-size:12px;color:#262626;font-weight:400;font-family:'Liberation Sans';transform:scaleX(0.9821);">Benefits of HR development</div>
<div class="t" style="left:65.82px;top:566.84px;font-size:12px;color:#262626;font-weight:400;font-family:'Liberation Sans';transform:scaleX(0.9847);">Increases the chances of employee retention</div>
<div class="t" style="left:66.80px;top:587.84px;font-size:12px;color:#262626;font-weight:400;font-family:'Liberation Sans';transform:scaleX(1.0084);">Boosts productivity and efficiency</div>
<div class="t" style="left:50.12px;top:608.84px;font-size:12px;color:#262626;font-weight:400;font-family:'Liberation Sans';transform:scaleX(0.9826);">Increases employee morale and satisfaction</div>
<div class="t" style="left:66.80px;top:629.84px;font-size:12px;color:#262626;font-weight:400;font-family:'Liberation Sans';transform:scaleX(0.9832);">Creates better inter-personal relationships</div>
<div class="t" style="left:66.80px;top:650.84px;font-size:12px;color:#262626;font-weight:400;font-family:'Liberation Sans';transform:scaleX(0.9868);">Makes internal hiring easier.</div>
<div class="t" style="left:560.93px;top:328.29px;font-size:16.2px;color:#2756a0;font-weight:400;font-family:'Liberation Sans';transform:scaleX(1.0721);">Human Resource Development Explained</div>
<div class="t" style="left:561.01px;top:366.69px;font-size:13.6px;color:#000000;font-weight:400;font-family:'Liberation Sans';transform:scaleX(0.9889);-webkit-text-stroke:0.12px #000">Human Resource Development is a methodology of enhancing the individual and organization skills,</div>
<div class="t" style="left:562.00px;top:385.99px;font-size:13.6px;color:#000000;font-weight:400;font-family:'Liberation Sans';transform:scaleX(0.9840);-webkit-text-stroke:0.12px #000">knowledge, experience and talents of employees in a company or organisation. Human Resource</div>
<div class="t" style="left:562.00px;top:405.29px;font-size:13.6px;color:#000000;font-weight:400;font-family:'Liberation Sans';transform:scaleX(0.9941);-webkit-text-stroke:0.12px #000">development is a broad term that involves several activities such as employee training, performance</div>
<div class="t" style="left:562.00px;top:424.49px;font-size:13.6px;color:#000000;font-weight:400;font-family:'Liberation Sans';transform:scaleX(0.9999);-webkit-text-stroke:0.12px #000">improvement, talent/career development, coaching, mentoring and succession planning.</div>
<div class="t" style="left:561.00px;top:454.49px;font-size:13.6px;color:#000000;font-weight:400;font-family:'Liberation Sans';transform:scaleX(1.0007);-webkit-text-stroke:0.12px #000">Human Resource Development is a critical tool for the growth, nurturing and evolvement of any</div>
<div class="t" style="left:562.00px;top:473.89px;font-size:13.6px;color:#000000;font-weight:400;font-family:'Liberation Sans';transform:scaleX(0.9928);-webkit-text-stroke:0.12px #000">organisation. In any setting, professional or personal, there are periods of stagnancy which need to</div>
<div class="t" style="left:562.00px;top:493.09px;font-size:13.6px;color:#000000;font-weight:400;font-family:'Liberation Sans';transform:scaleX(0.9735);-webkit-text-stroke:0.12px #000">be addressed. When it comes to a professional setting, stagnancy can go as far as affecting sales,</div>
<div class="t" style="left:562.00px;top:512.39px;font-size:13.6px;color:#000000;font-weight:400;font-family:'Liberation Sans';transform:scaleX(0.9959);-webkit-text-stroke:0.12px #000">revenue, efficiency as well as productivity. This is why it is imperative for manager, or executives to</div>
<div class="t" style="left:562.00px;top:531.69px;font-size:13.6px;color:#000000;font-weight:400;font-family:'Liberation Sans';transform:scaleX(0.9859);-webkit-text-stroke:0.12px #000">regularly analyse the human resource side of business to recognise if there is room for</div>
<div class="t" style="left:562.00px;top:551.09px;font-size:13.6px;color:#000000;font-weight:400;font-family:'Liberation Sans';transform:scaleX(1.0310);-webkit-text-stroke:0.12px #000">improvement.</div>
<div class="t" style="left:562.00px;top:581.49px;font-size:13.6px;color:#000000;font-weight:400;font-family:'Liberation Sans';transform:scaleX(0.9790);-webkit-text-stroke:0.12px #000">Are you an HR manager, business owner who is looking for ways to give your business that</div>
<div class="t" style="left:562.00px;top:600.89px;font-size:13.6px;color:#000000;font-weight:400;font-family:'Liberation Sans';transform:scaleX(0.9929);-webkit-text-stroke:0.12px #000">competitive edge, human resource development could be your solution? The human resource of any</div>
<div class="t" style="left:562.00px;top:620.09px;font-size:13.6px;color:#000000;font-weight:400;font-family:'Liberation Sans';transform:scaleX(0.9985);-webkit-text-stroke:0.12px #000">organisation can make it or break it. If you want to ensure that your resources are fully utilised and</div>
<div class="t" style="left:562.00px;top:639.39px;font-size:13.6px;color:#000000;font-weight:400;font-family:'Liberation Sans';transform:scaleX(0.9931);-webkit-text-stroke:0.12px #000">employees’ greatest potential is harnessed and utilised, consider integrating human resource</div>
<div class="t" style="left:562.00px;top:658.69px;font-size:13.6px;color:#000000;font-weight:400;font-family:'Liberation Sans';transform:scaleX(0.9912);-webkit-text-stroke:0.12px #000">development into your organisational culture. This article covers what HRD entails, its benefits, as</div>
<div class="t" style="left:562.98px;top:677.99px;font-size:13.6px;color:#000000;font-weight:400;font-family:'Liberation Sans';transform:scaleX(0.9845);-webkit-text-stroke:0.12px #000">well as guidelines on tailoring a HRD plan best suited for your organisation.</div>
<div class="t" style="left:8.30px;top:711.93px;font-size:11.3px;color:#333333;font-weight:400;font-family:'Liberation Sans';transform:scaleX(0.9825);">Page 1 of 6</div>
<div class="t" style="left:84.00px;top:711.93px;font-size:11.3px;color:#333333;font-weight:400;font-family:'Liberation Sans';transform:scaleX(0.9939);">2505 words</div>
<div class="t" style="left:193.30px;top:711.93px;font-size:11.3px;color:#333333;font-weight:400;font-family:'Liberation Sans';transform:scaleX(1.0146);">English (United Kingdom)</div>
<div class="t" style="left:1331.80px;top:711.93px;font-size:11.3px;color:#333333;font-weight:400;font-family:'Liberation Sans';transform:scaleX(0.8978);">100%</div>
<div class="t" style="left:1037.30px;top:741.83px;font-size:14.5px;color:#ffffff;font-weight:400;font-family:'Liberation Sans';transform:scaleX(0.8864);">20°C</div>
<div class="t" style="left:1074.56px;top:741.83px;font-size:14.5px;color:#ffffff;font-weight:400;font-family:'Liberation Sans';transform:scaleX(0.9389);">Partly cloudy</div>
<div class="t" style="left:1219.50px;top:741.64px;font-size:12px;color:#ffffff;font-weight:400;font-family:'Liberation Sans';transform:scaleX(0.8492);">ENG</div>
<div class="t" style="left:1259.70px;top:732.34px;font-size:12px;color:#ffffff;font-weight:400;font-family:'Liberation Sans';transform:scaleX(0.9464);">1:16 AM</div>
<div class="t" style="left:1255.40px;top:751.04px;font-size:12px;color:#ffffff;font-weight:400;font-family:'Liberation Sans';transform:scaleX(0.9477);">9/20/2021</div>
<div class="t" style="left:462.50px;top:191.96px;font-size:9.5px;color:#3a3a3a;font-weight:400;font-family:'Liberation Sans';transform:scaleX(1.0000);">1</div>
<div class="t" style="left:654.50px;top:191.96px;font-size:9.5px;color:#3a3a3a;font-weight:400;font-family:'Liberation Sans';transform:scaleX(1.0000);">1</div>
<div class="t" style="left:750.50px;top:191.96px;font-size:9.5px;color:#3a3a3a;font-weight:400;font-family:'Liberation Sans';transform:scaleX(1.0000);">2</div>
<div class="t" style="left:846.50px;top:191.96px;font-size:9.5px;color:#3a3a3a;font-weight:400;font-family:'Liberation Sans';transform:scaleX(1.0000);">3</div>
<div class="t" style="left:942.50px;top:191.96px;font-size:9.5px;color:#3a3a3a;font-weight:400;font-family:'Liberation Sans';transform:scaleX(1.0000);">4</div>
<div class="t" style="left:1038.50px;top:191.96px;font-size:9.5px;color:#3a3a3a;font-weight:400;font-family:'Liberation Sans';transform:scaleX(1.0000);">5</div>
<div class="t" style="left:1134.50px;top:191.96px;font-size:9.5px;color:#3a3a3a;font-weight:400;font-family:'Liberation Sans';transform:scaleX(1.0000);">6</div>
<div class="t" style="left:1230.50px;top:191.96px;font-size:9.5px;color:#3a3a3a;font-weight:400;font-family:'Liberation Sans';transform:scaleX(1.0000);">7</div>
</body></html>
